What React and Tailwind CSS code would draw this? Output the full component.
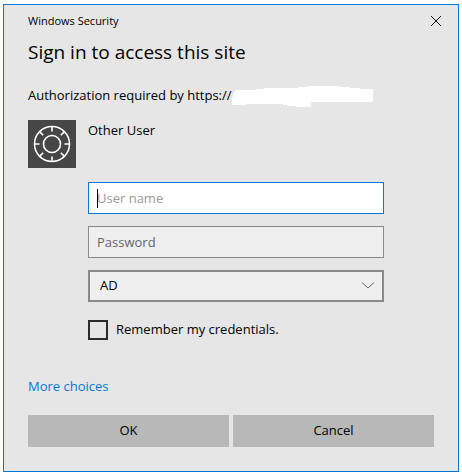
function CredentialIcon() {
  return (
    <svg viewBox="0 0 48 48" className="size-12 shrink-0 bg-[#464646]" fill="none" stroke="#fff" aria-hidden="true">
      <circle cx="24" cy="24" r="17.5" strokeWidth="1.5" />
      <circle cx="24" cy="24" r="8.5" strokeWidth="1.6" />
      <path
        d="M24 6.5v5M24 36.5v5M6.5 24h5M36.5 24h5M11.6 11.6l3.6 3.6M32.8 32.8l3.6 3.6M36.4 11.6l-3.6 3.6M15.2 32.8l-3.6 3.6"
        strokeWidth="1.6"
      />
    </svg>
  )
}

function HiddenHost() {
  return (
    <svg viewBox="0 0 141 21" className="h-[21px] w-[141px] shrink-0" fill="#fff" shapeRendering="crispEdges" aria-hidden="true">
      <path d="M4 4h20V3h8V2h34V1h8V0h33v1h11v1h10v1h13v13H79v5H64v-1h-9v-1h-4v-1H15v1H0V11h1V8h1V6h1z" />
    </svg>
  )
}

export default function App() {
  return (
    <main className="min-h-screen bg-white pt-1 pr-[3px] pb-px pl-[3px] font-['Open_Sans',sans-serif] text-[13px] text-black">
      <form
        className="flex flex-col border border-[#0078d7] bg-[#e6e6e6] px-6 pb-6"
        onSubmit={(e) => e.preventDefault()}
      >
        {/* Title bar */}
        <header className="flex h-8 items-center justify-between">
          <span className="text-[11px]">Windows Security</span>
          <button type="button" aria-label="Close" className="-mr-[10px] p-[3px]">
            <svg viewBox="0 0 10 10" className="size-[10px]" fill="none" stroke="#111">
              <path d="M0 0l10 10M10 0L0 10" />
            </svg>
          </button>
        </header>

        <h1 className="text-[19px] leading-[30px]">Sign in to access this site</h1>
        <p className="mt-[17px] flex h-6 items-center">
          Authorization required by https://
          <HiddenHost />
        </p>

        <div className="mt-3 flex gap-3">
          <CredentialIcon />
          <div className="mr-[50px] flex flex-1 flex-col gap-3">
            <h2 className="h-[50px] leading-5">Other User</h2>
            <div className="relative flex">
              <input
                type="text"
                aria-label="User name"
                placeholder="User name"
                className="h-8 w-full border border-[#0078d7] bg-white px-2 outline-none placeholder:text-[#999]"
              />
              <span className="absolute top-[7px] left-[9px] h-[19px] w-px bg-black" />
            </div>
            <input
              type="password"
              aria-label="Password"
              placeholder="Password"
              className="h-8 w-full border border-[#8a8a8a] bg-[#efefef] px-2 outline-none placeholder:text-[#666]"
            />
            <div className="relative flex">
              <select
                aria-label="Domain"
                className="h-8 w-full appearance-none border-2 border-[#8a8a8a] bg-[#efefef] px-[10px] outline-none"
              >
                <option>AD</option>
              </select>
              <svg
                viewBox="0 0 12 7"
                className="pointer-events-none absolute top-3 right-[10px] h-[7px] w-3"
                fill="none"
                stroke="#666"
                aria-hidden="true"
              >
                <path d="M0 .5l6 5.5 6-5.5" />
              </svg>
            </div>
            <label className="mt-[6px] flex items-center gap-2">
              <input type="checkbox" className="size-5 appearance-none border-2 border-[#2b2b2b]" />
              Remember my credentials.
            </label>
          </div>
        </div>

        <a href="#more" className="mt-9 self-start leading-5 text-[#0078d7]">
          More choices
        </a>

        <div className="mt-[19px] grid grid-cols-2 gap-1">
          <button type="submit" className="h-8 bg-[#b8b8b8]">
            OK
          </button>
          <button type="button" className="h-8 bg-[#b8b8b8]">
            Cancel
          </button>
        </div>
      </form>
    </main>
  )
}
